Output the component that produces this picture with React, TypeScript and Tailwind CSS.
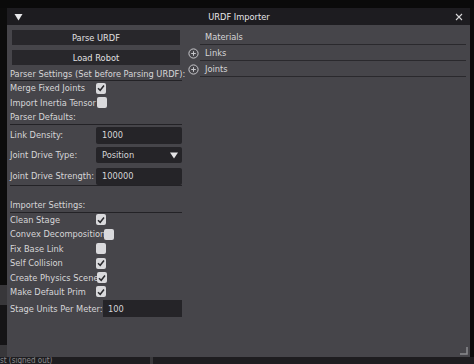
import React from "react";

const font = { fontFamily: '"DejaVu Sans Condensed", "DejaVu Sans", sans-serif' };

function Check({ on }: { on: boolean }) {
  return (
    <div className="w-[10px] h-[11px] rounded-[2px] bg-[#d9d9dc] flex items-center justify-center shrink-0">
      {on && (
        <svg width="8" height="8" viewBox="0 0 8 8">
          <path d="M1 4.2 L3.2 6.3 L7 1.5" stroke="#2a2a2e" strokeWidth="1.5" fill="none" />
        </svg>
      )}
    </div>
  );
}

function CheckRow({ label, on, w }: { label: string; on: boolean; w: string }) {
  return (
    <div className="flex items-center h-[14.4px]">
      <span className={`${w} shrink-0 whitespace-nowrap`}>{label}</span>
      <Check on={on} />
    </div>
  );
}

function Sep() {
  return <div className="h-px bg-[#232226] w-[172px] shrink-0" />;
}

function Field({ label, value, mt }: { label: string; value: string; mt?: string }) {
  return (
    <div className={`flex items-center h-[17px] ${mt ?? ""}`}>
      <span className="w-[86px] shrink-0 whitespace-nowrap">{label}</span>
      <div className="w-[86px] h-[17px] bg-[#252428] rounded-[2px] pl-[6px] flex items-center">{value}</div>
    </div>
  );
}

function PlusIcon() {
  return (
    <svg width="11" height="11" viewBox="0 0 11 11" className="shrink-0">
      <circle cx="5.5" cy="5.5" r="4.6" stroke="#c8c8cc" strokeWidth="1" fill="none" />
      <path d="M3.2 5.5 H7.8 M5.5 3.2 V7.8" stroke="#c8c8cc" strokeWidth="1" />
    </svg>
  );
}

export default function App() {
  return (
    <div className="w-[474px] h-[364px] bg-[#0a0a0a] flex flex-col overflow-hidden text-[9.2px] text-[#d6d6d8]" style={font}>
      <div className="h-[8px] shrink-0" />
      <div className="flex flex-1 min-h-0">
        <div className="w-[7px] shrink-0 flex flex-col">
          <div className="h-[277px] bg-[#0c0c0c]" />
          <div className="h-[20px] bg-[#38373a]" />
          <div className="h-[40px] bg-[#151416]" />
          <div className="flex-1 bg-[#38373a]" />
        </div>
        <div className="w-[463px] shrink-0 flex flex-col bg-[#46454a]">
          <div className="h-[17px] bg-[#1d1c20] flex items-center px-[7px] text-[#e6e6e8]">
            <svg width="9" height="8" viewBox="0 0 9 8"><path d="M0.5 1 H8.5 L4.5 7.5 Z" fill="#e8e8ea" /></svg>
            <span className="flex-1 text-center">URDF Importer</span>
            <svg width="8" height="8" viewBox="0 0 8 8"><path d="M1 1 L7 7 M7 1 L1 7" stroke="#d6d6d8" strokeWidth="1.1" /></svg>
          </div>
          <div className="flex flex-1 min-h-0 relative">
            <div className="w-[179px] pl-[3px] pt-[5px] flex flex-col shrink-0">
              <div className="ml-[2px] w-[168px] h-[15px] bg-[#28272b] flex items-center justify-center text-[#e0e0e2]">Parse URDF</div>
              <div className="ml-[2px] mt-[5px] w-[168px] h-[15px] bg-[#28272b] flex items-center justify-center text-[#e0e0e2]">Load Robot</div>
              <div className="mt-[2px] h-[13px] flex items-center whitespace-nowrap">Parser Settings (Set before Parsing URDF):</div>
              <Sep />
              <CheckRow label="Merge Fixed Joints" on w="w-[86px]" />
              <CheckRow label="Import Inertia Tensor" on={false} w="w-[87px]" />
              <div className="h-[13px] flex items-center mt-[1px]">Parser Defaults:</div>
              <Sep />
              <Field label="Link Density:" value="1000" mt="mt-[2px]" />
              <div className="flex items-center h-[17px] mt-[3px]">
                <span className="w-[86px] shrink-0">Joint Drive Type:</span>
                <div className="w-[86px] h-[16px] bg-[#252428] rounded-[2px] pl-[6px] pr-[4px] flex items-center justify-between">
                  <span>Position</span>
                  <svg width="8" height="7" viewBox="0 0 8 7"><path d="M0 0.5 H8 L4 6.5 Z" fill="#e4e4e6" /></svg>
                </div>
              </div>
              <Field label="Joint Drive Strength:" value="100000" mt="mt-[4px]" />
              <Sep />
              <div className="h-[13px] flex items-center mt-[13px]">Importer Settings:</div>
              <Sep />
              <CheckRow label="Clean Stage" on w="w-[86px]" />
              <CheckRow label="Convex Decomposition" on={false} w="w-[94px]" />
              <CheckRow label="Fix Base Link" on={false} w="w-[86px]" />
              <CheckRow label="Self Collision" on w="w-[86px]" />
              <CheckRow label="Create Physics Scene" on w="w-[87px]" />
              <CheckRow label="Make Default Prim" on w="w-[86px]" />
              <div className="flex items-center h-[17px] mt-[1px]">
                <span className="w-[93px] shrink-0 whitespace-nowrap">Stage Units Per Meter:</span>
                <div className="w-[79px] h-[17px] bg-[#252428] pl-[5px] flex items-center">100</div>
              </div>
            </div>
            <div className="flex-1 flex flex-col pt-[5px] pr-[4px]">
              <div className="flex items-center h-[15px] border-b border-[#2a292d] ml-[14px] pl-[5px]">Materials</div>
              <div className="flex items-center h-[16px]">
                <div className="w-[14px] pl-[2px]"><PlusIcon /></div>
                <div className="flex-1 h-full border-b border-[#2a292d] pl-[5px] flex items-center">Links</div>
              </div>
              <div className="flex items-center h-[16px]">
                <div className="w-[14px] pl-[2px]"><PlusIcon /></div>
                <div className="flex-1 h-full border-b border-[#2a292d] pl-[5px] flex items-center">Joints</div>
              </div>
            </div>
            <svg width="8" height="8" viewBox="0 0 8 8" className="absolute right-[2px] bottom-[2px]">
              <path d="M7 0 V7 H0" stroke="#8a8a8e" strokeWidth="1.5" fill="none" />
            </svg>
          </div>
        </div>
        <div className="flex-1 bg-[#0c0c0c]" />
      </div>
      <div className="h-[7px] shrink-0 bg-[#1e1d20] flex text-[8px] text-[#8a8a8c] leading-[7px] overflow-hidden">
        <span className="w-[150px]">st (signed out)</span>
        <div className="w-[3px] bg-[#3a393c]" />
      </div>
    </div>
  );
}
